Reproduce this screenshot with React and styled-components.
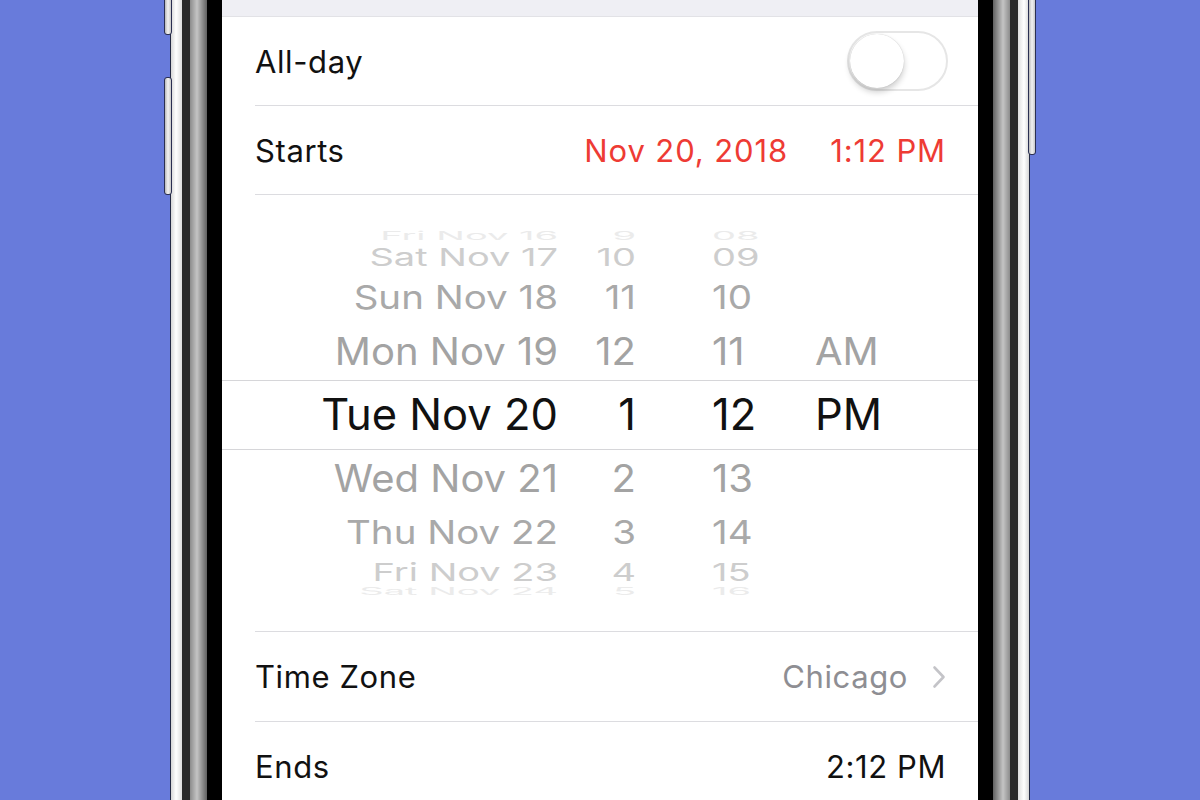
import React from 'react';
import styled, { createGlobalStyle } from 'styled-components';

const GlobalStyle = createGlobalStyle`
  html, body {
    margin: 0;
    padding: 0;
    background: #687bdb;
  }
  body {
    font-family: Inter, "Noto Sans", "Liberation Sans", sans-serif;
  }
`;

const pickerRows = [
  { day: 'Fri Nov 16', hour: '9', min: '08', period: '', h: 14, size: 38, sy: 0.3, color: '#ebebeb' },
  { day: 'Sat Nov 17', hour: '10', min: '09', period: '', h: 28, size: 38, sy: 0.64, color: '#cdcdcd' },
  { day: 'Sun Nov 18', hour: '11', min: '10', period: '', h: 52, size: 38.5, sy: 0.86, color: '#a9a9a9' },
  { day: 'Mon Nov 19', hour: '12', min: '11', period: 'AM', h: 57, size: 40, sy: 0.96, color: '#a3a3a3' },
  { day: 'Tue Nov 20', hour: '1', min: '12', period: 'PM', h: 70, size: 43.5, sy: 1, color: '#111', selected: true },
  { day: 'Wed Nov 21', hour: '2', min: '13', period: '', h: 58, size: 40, sy: 0.96, color: '#a3a3a3' },
  { day: 'Thu Nov 22', hour: '3', min: '14', period: '', h: 49, size: 38.5, sy: 0.86, color: '#a9a9a9' },
  { day: 'Fri Nov 23', hour: '4', min: '15', period: '', h: 30, size: 38, sy: 0.64, color: '#cdcdcd' },
  { day: 'Sat Nov 24', hour: '5', min: '16', period: '', h: 8, size: 38, sy: 0.28, color: '#ebebeb' },
];

const App = () => {
  return (
    <>
      <GlobalStyle />
      <Stage>
        <Phone>
          <SideButton $side="left" $top={-10} $height={45} />
          <SideButton $side="left" $top={77} $height={118} />
          <SideButton $side="right" $top={-10} $height={165} />
          <Bezel $side="left" />
          <Screen>
            <TopBand />
            <Cell>
              <CellInner>
                <Label>All-day</Label>
                <Toggle>
                  <Knob />
                </Toggle>
              </CellInner>
            </Cell>
            <Cell>
              <CellInner>
                <Label>Starts</Label>
                <RedValues>
                  <RedText>Nov 20, 2018</RedText>
                  <RedText>1:12 PM</RedText>
                </RedValues>
              </CellInner>
            </Cell>
            <Picker>
              <Wheel>
                {pickerRows.map((r) => (
                  <WheelRow key={r.day} $h={r.h} $selected={r.selected}>
                    <WheelText $size={r.size} $sy={r.sy} $color={r.color}>
                      <DayCell>{r.day}</DayCell>
                      <HourCell>{r.hour}</HourCell>
                      <MinuteCell>{r.min}</MinuteCell>
                      <PeriodCell>{r.period}</PeriodCell>
                    </WheelText>
                  </WheelRow>
                ))}
              </Wheel>
            </Picker>
            <Cell $h={90}>
              <CellInner>
                <Label>Time Zone</Label>
                <Detail>
                  <GrayText>Chicago</GrayText>
                  <svg width="14" height="24" viewBox="0 0 14 24">
                    <path d="M2.5 2.5 L11.5 12 L2.5 21.5" fill="none" stroke="#c4c4c8" strokeWidth="2.6" strokeLinecap="round" strokeLinejoin="round" />
                  </svg>
                </Detail>
              </CellInner>
            </Cell>
            <Cell $h={90}>
              <CellInner>
                <Label>Ends</Label>
                <Label>2:12 PM</Label>
              </CellInner>
            </Cell>
          </Screen>
          <Bezel $side="right" />
        </Phone>
      </Stage>
    </>
  );
};

const Stage = styled.div`
  width: 1200px;
  height: 800px;
  overflow: hidden;
  display: flex;
  justify-content: center;
  background: #687bdb;
`;

const Phone = styled.div`
  position: relative;
  width: 860px;
  height: 800px;
  display: flex;
`;

const SideButton = styled.div`
  position: absolute;
  top: ${(p) => p.$top}px;
  height: ${(p) => p.$height}px;
  width: 8px;
  ${(p) => (p.$side === 'left' ? 'left: -6px;' : 'right: -6px;')}
  border-radius: 3px;
  background: linear-gradient(90deg, #b8b8b8, #f2f2f2 50%, #c8c8c8);
  border: 1px solid #2a2f52;
  box-sizing: border-box;
`;

const bezelStops = `
  #242a45 0px, #242a45 1px,
  #d6d6d6 1px, #ffffff 6px, #dedede 12px,
  #2a2a2a 12px, #2a2a2a 20px,
  #8c8c8c 20px, #c4c4c4 27px, #606060 37px,
  #000 37px, #000 52px`;

const Bezel = styled.div`
  width: 52px;
  flex: none;
  background: linear-gradient(${(p) => (p.$side === 'left' ? '90deg' : '270deg')}, ${bezelStops});
`;

const Screen = styled.div`
  flex: 1;
  background: #fff;
  display: flex;
  flex-direction: column;
  overflow: hidden;
`;

const TopBand = styled.div`
  height: 17px;
  flex: none;
  background: #efeff4;
  box-sizing: border-box;
  border-bottom: 1px solid #e2e2e6;
`;

const Cell = styled.div`
  height: ${(p) => p.$h || 89}px;
  flex: none;
  padding-left: 33px;
  display: flex;
`;

const CellInner = styled.div`
  flex: 1;
  display: flex;
  align-items: center;
  justify-content: space-between;
  padding-right: 32px;
  border-bottom: 1px solid #dcdce0;
`;

const Label = styled.span`
  font-size: 31px;
  color: #111;
  letter-spacing: 0.6px;
`;

const RedValues = styled.div`
  display: flex;
  gap: 42px;
`;

const RedText = styled.span`
  font-size: 31px;
  letter-spacing: 0.9px;
  color: #ee3b34;
`;

const Detail = styled.div`
  display: flex;
  align-items: center;
  gap: 24px;
`;

const GrayText = styled.span`
  font-size: 31px;
  letter-spacing: 0.6px;
  color: #8e8e93;
`;

const Toggle = styled.div`
  width: 101px;
  height: 60px;
  box-sizing: border-box;
  border-radius: 30px;
  border: 2px solid #e6e6e6;
  background: #fff;
  display: flex;
  align-items: center;
  padding: 1px;
  margin-right: -2px;
`;

const Knob = styled.div`
  width: 54px;
  height: 54px;
  border-radius: 50%;
  background: #fff;
  box-shadow: 0 4px 6px rgba(0, 0, 0, 0.2), 0 0 1px rgba(0, 0, 0, 0.25);
`;

const Picker = styled.div`
  height: 437px;
  flex: none;
  display: flex;
  flex-direction: column;
`;

const Wheel = styled.div`
  flex: 1;
  display: flex;
  flex-direction: column;
  padding-top: 34px;
  &::after {
    content: '';
    margin-top: auto;
    margin-left: 33px;
    border-bottom: 1px solid #dcdce0;
  }
`;

const WheelRow = styled.div`
  height: ${(p) => p.$h}px;
  flex: none;
  display: flex;
  align-items: center;
  box-sizing: border-box;
  ${(p) =>
    p.$selected &&
    `
    border-top: 1px solid #d6d6d9;
    border-bottom: 1px solid #d6d6d9;
  `}
`;

const WheelText = styled.div`
  flex: 1;
  display: grid;
  grid-template-columns: 336px 78px 179px 1fr;
  align-items: center;
  font-size: ${(p) => p.$size}px;
  line-height: 1;
  color: ${(p) => p.$color};
  transform: scaleY(${(p) => p.$sy});
  white-space: nowrap;
`;

const DayCell = styled.span`
  text-align: right;
`;

const HourCell = styled.span`
  text-align: right;
`;

const MinuteCell = styled.span`
  padding-left: 76px;
`;

const PeriodCell = styled.span``;

export default App;
